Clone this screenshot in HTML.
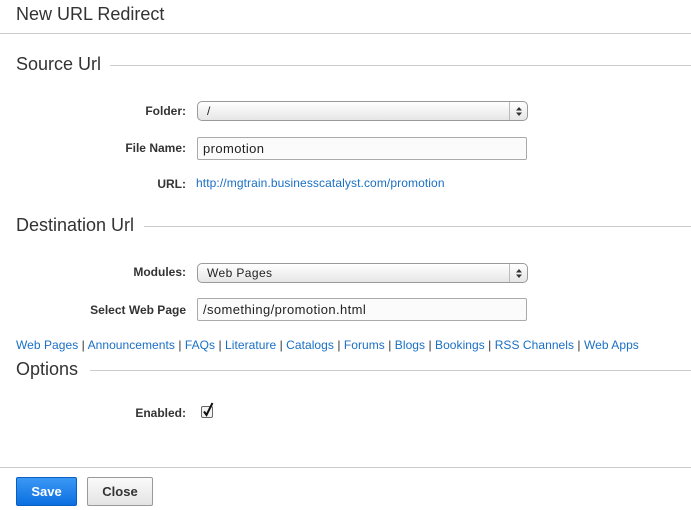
<!DOCTYPE html>
<html><head><style>
*{margin:0;padding:0;box-sizing:border-box}
body{width:691px;height:510px;background:#fff;font-family:"Liberation Sans",Arial,sans-serif;color:#333;position:relative;overflow:hidden}
.a{position:absolute;white-space:nowrap}
.h{font-size:18px;color:#333}
.ln{position:absolute;height:1px;background:#ccc}
.lb{position:absolute;font-size:12px;font-weight:bold;color:#333;text-align:right;width:186px;left:0}
.sel{position:absolute;left:197px;width:331px;height:20px;border:1px solid #9a9a9a;border-radius:5px;background:linear-gradient(#fff,#e6e6e6);font-size:12px;padding:2px 0 0 9px;color:#222;letter-spacing:0.4px}
.sel .ar{position:absolute;right:0;top:0;width:18px;height:18px;border-left:1px solid #bbb}
.inp{position:absolute;left:197px;width:330px;height:23px;border:1px solid #aaa;border-radius:2px;background:#fbfbfb;font-size:13px;padding:3px 0 0 5px;color:#222;letter-spacing:0.4px}
.lk{color:#1a6fc4;text-decoration:none}
.btn{position:absolute;top:477px;height:29px;font-size:13px;font-weight:bold;text-align:center;line-height:28px;border-radius:2px}
</style></head><body>
<div class="a h" style="left:16px;top:4px">New URL Redirect</div>
<div class="ln" style="left:0;top:33px;width:691px"></div>

<div class="a h" style="left:16px;top:54px">Source Url</div>
<div class="ln" style="left:110px;top:65px;width:581px"></div>

<div class="lb" style="top:104px">Folder:</div>
<div class="sel" style="top:101px">/<div class="ar"><svg width="18" height="18"><path d="M9 5l3 3.5H6z M9 14l3-3.5H6z" fill="#333"/></svg></div></div>

<div class="lb" style="top:141px">File Name:</div>
<div class="inp" style="top:137px">promotion</div>

<div class="lb" style="top:177px">URL:</div>
<div class="a lk" style="left:196px;top:176px;font-size:12px;letter-spacing:0.1px">http://mgtrain.businesscatalyst.com/promotion</div>

<div class="a h" style="left:16px;top:215px">Destination Url</div>
<div class="ln" style="left:144px;top:226px;width:547px"></div>

<div class="lb" style="top:265px">Modules:</div>
<div class="sel" style="top:263px">Web Pages<div class="ar"><svg width="18" height="18"><path d="M9 5l3 3.5H6z M9 14l3-3.5H6z" fill="#333"/></svg></div></div>

<div class="lb" style="top:303px">Select Web Page</div>
<div class="inp" style="top:298px">/something/promotion.html</div>

<div class="a" style="left:16px;top:338px;font-size:12px;color:#333;letter-spacing:0.05px"><span class="lk">Web Pages</span> | <span class="lk">Announcements</span> | <span class="lk">FAQs</span> | <span class="lk">Literature</span> | <span class="lk">Catalogs</span> | <span class="lk">Forums</span> | <span class="lk">Blogs</span> | <span class="lk">Bookings</span> | <span class="lk">RSS Channels</span> | <span class="lk">Web Apps</span></div>

<div class="a h" style="left:16px;top:359px">Options</div>
<div class="ln" style="left:90px;top:370px;width:601px"></div>

<div class="lb" style="top:406px">Enabled:</div>
<svg class="a" style="left:200px;top:402px" width="18" height="18"><rect x="1.5" y="4.5" width="11" height="11" rx="1.5" fill="#f4f4f4" stroke="#666"/><path d="M4 9.5l2.5 3.5 6-12" fill="none" stroke="#111" stroke-width="2"/></svg>

<div class="ln" style="left:0;top:467px;width:691px"></div>
<div class="btn" style="left:16px;width:61px;background:linear-gradient(#3b98f5,#0b6fe0);color:#fff;border:1px solid #0a5fc2">Save</div>
<div class="btn" style="left:87px;width:66px;background:linear-gradient(#fafafa,#e4e4e4);color:#333;border:1px solid #999">Close</div>
</body></html>
